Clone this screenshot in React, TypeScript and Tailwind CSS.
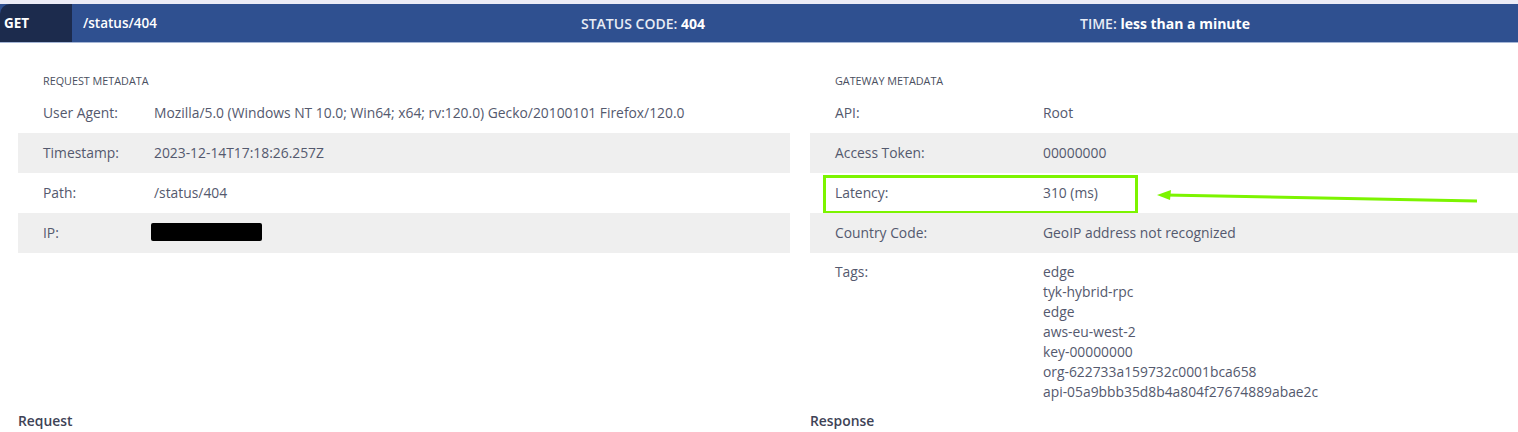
import React from "react";

type Row = { label: string; value: React.ReactNode; mark?: boolean };

const requestRows: Row[] = [
  { label: "User Agent:", value: "Mozilla/5.0 (Windows NT 10.0; Win64; x64; rv:120.0) Gecko/20100101 Firefox/120.0" },
  { label: "Timestamp:", value: "2023-12-14T17:18:26.257Z" },
  { label: "Path:", value: "/status/404" },
  { label: "IP:", value: <span className="block -ml-[3px] -mt-[3px] w-[111px] h-[18px] bg-black rounded-[2px]" /> },
];

const gatewayRows: Row[] = [
  { label: "API:", value: "Root" },
  { label: "Access Token:", value: "00000000" },
  { label: "Latency:", value: "310 (ms)", mark: true },
  { label: "Country Code:", value: "GeoIP address not recognized" },
];

const tags = [
  "edge",
  "tyk-hybrid-rpc",
  "edge",
  "aws-eu-west-2",
  "key-00000000",
  "org-622733a159732c0001bca658",
  "api-05a9bbb35d8b4a804f27674889abae2c",
];

function MetaRow({ row, index, labelWidth }: { row: Row; index: number; labelWidth: string }) {
  return (
    <div className={`relative flex items-center h-[40px] pl-[25px] pt-[1px] ${index % 2 === 1 ? "bg-[#efefef]" : "bg-white"}`}>
      <span className={`${labelWidth} shrink-0`}>{row.label}</span>
      <span>{row.value}</span>
      {row.mark && (
        <>
          {/* highlight box + arrow drawn over the row */}
          <div className="absolute left-[13px] top-[2px] w-[315px] h-[39px] border-[3px] border-[#7cf400]" />
          <svg className="absolute left-[345px] top-[14px]" width="325" height="20" viewBox="0 0 325 20">
            <line x1="10" y1="8" x2="322" y2="14" stroke="#7cf400" strokeWidth="3" />
            <polygon points="2,8 16,3 15,13" fill="#7cf400" />
          </svg>
        </>
      )}
    </div>
  );
}

export default function App() {
  return (
    <div className="w-[1518px] bg-white text-[13.85px] text-[#54596e]" style={{ fontFamily: '"Open Sans", "Liberation Sans", sans-serif' }}>
      <div className="h-[4px] bg-[#ececf6]" />
      <header className="flex h-[39px] bg-[#2f5090] border-b border-[#a5b6d6] text-white text-[14px]">
        <div className="w-[72px] bg-[#1c2b4d] rounded-tl-[10px] flex items-center pl-[4px] font-bold text-[13.5px]">GET</div>
        <div className="w-[500px] flex items-center pl-[11px] font-semibold text-[13.5px]">/status/404</div>
        <div className="w-[500px] flex items-center pl-[9px] font-semibold text-[#e8ecf5]">
          STATUS CODE:&nbsp;<span className="font-bold text-white">404</span>
        </div>
        <div className="flex items-center pl-[8px] font-semibold text-[#e8ecf5]">
          TIME:&nbsp;<span className="font-bold text-white">less than a minute</span>
        </div>
      </header>

      <div className="grid grid-cols-[772px_708px] gap-x-[20px] pl-[18px] pt-[31px]">
        <section>
          <h3 className="pl-[25px] text-[10.8px] uppercase leading-[14px] mb-[5px] text-[#4a4f60]">Request Metadata</h3>
          {requestRows.map((r, i) => (
            <MetaRow key={r.label} row={r} index={i} labelWidth="w-[111px]" />
          ))}
        </section>
        <section>
          <h3 className="pl-[25px] text-[10.8px] uppercase leading-[14px] mb-[5px] text-[#4a4f60]">Gateway Metadata</h3>
          {gatewayRows.map((r, i) => (
            <MetaRow key={r.label} row={r} index={i} labelWidth="w-[208px]" />
          ))}
          <div className="flex pl-[25px] pt-[9px] leading-[20px]">
            <span className="w-[208px] shrink-0">Tags:</span>
            <div className="flex flex-col">
              {tags.map((t, i) => (
                <span key={i}>{t}</span>
              ))}
            </div>
          </div>
        </section>
        <h4 className="pt-[9px] font-semibold text-[#3e4356]">Request</h4>
        <h4 className="pt-[9px] font-semibold text-[#3e4356]">Response</h4>
      </div>
    </div>
  );
}
